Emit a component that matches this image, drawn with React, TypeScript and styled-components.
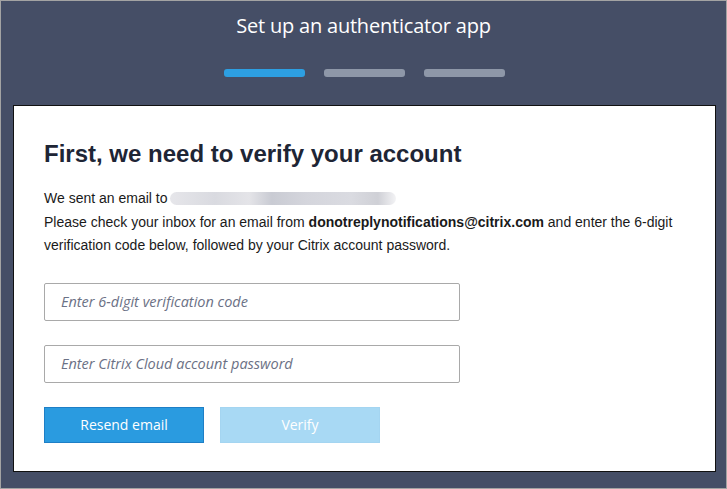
import React from "react";
import styled, { createGlobalStyle } from "styled-components";

const Global = createGlobalStyle`
  html, body { margin: 0; padding: 0; background: #454e66; }
  * { box-sizing: border-box; }
`;

const Frame = styled.div`
  width: 727px;
  height: 489px;
  border: 1px solid #a3a3a3;
  background: #454e66;
  display: flex;
  flex-direction: column;
  overflow: hidden;
`;

const Header = styled.header`
  display: flex;
  flex-direction: column;
  align-items: center;
  padding-top: 10px;
  height: 104px;
`;

const Title = styled.h1`
  margin: 0;
  font-family: "Open Sans", "Noto Sans", sans-serif;
  font-weight: 400;
  font-size: 20px;
  line-height: 30px;
  color: #ffffff;
  letter-spacing: -0.2px;
`;

const Steps = styled.div`
  display: flex;
  gap: 19px;
  margin-top: 28px;
  padding-left: 2px;
`;

const Step = styled.div<{ $active?: boolean }>`
  width: 81px;
  height: 8px;
  border-radius: 3px;
  background: ${(p) => (p.$active ? "#2d9fe2" : "#8e97a8")};
`;

const Card = styled.section`
  margin-left: 12px;
  width: 703px;
  height: 367px;
  background: #ffffff;
  border: 1px solid #111111;
  padding: 34px 30px 0 30px;
`;

const Heading = styled.h2`
  margin: 0;
  font-family: "Liberation Sans", Arial, sans-serif;
  font-weight: 700;
  font-size: 24px;
  line-height: 28px;
  color: #1e2535;
`;

const Body = styled.p`
  margin: 19px 0 0 0;
  font-family: "Liberation Sans", Arial, sans-serif;
  font-size: 14px;
  line-height: 23.5px;
  color: #1a1a1a;
`;

const Blur = styled.span`
  display: inline-block;
  vertical-align: -2px;
  width: 226px;
  height: 13px;
  margin-left: 3px;
  border-radius: 7px;
  background: linear-gradient(
    90deg,
    #e6e6ea 0%,
    #d9dae0 20%,
    #e4e4e8 35%,
    #c9cbd3 45%,
    #d4d5dc 60%,
    #dadbe1 80%,
    #cfd0d6 92%,
    #f3f3f5 100%
  );
`;

const Form = styled.div`
  display: flex;
  flex-direction: column;
  gap: 24px;
  margin-top: 25px;
`;

const Input = styled.input`
  width: 416px;
  height: 38px;
  border: 1px solid #a9a9a9;
  border-radius: 2px;
  padding: 0 16px;
  font-family: "Open Sans", "Noto Sans", sans-serif;
  font-style: italic;
  font-size: 14.5px;
  color: #333;
  background: #fff;
  outline: none;
  &::placeholder {
    color: #6b7185;
  }
`;

const Buttons = styled.div`
  display: flex;
  gap: 16px;
  margin-top: 24px;
`;

const Button = styled.button<{ $disabled?: boolean }>`
  width: 160px;
  height: 36px;
  border: 1px solid ${(p) => (p.$disabled ? "#a4d5f1" : "#1e7fc6")};
  background: ${(p) => (p.$disabled ? "#a8d9f4" : "#2a9be0")};
  color: #ffffff;
  font-family: "Open Sans", "Noto Sans", sans-serif;
  font-size: 14px;
  font-weight: 500;
  cursor: pointer;
  padding: 0;
`;

export default function App() {
  return (
    <>
      <Global />
      <Frame>
        <Header>
          <Title>Set up an authenticator app</Title>
          <Steps>
            <Step $active />
            <Step />
            <Step />
          </Steps>
        </Header>
        <Card>
          <Heading>First, we need to verify your account</Heading>
          <Body>
            We sent an email to
            <Blur />
            <br />
            Please check your inbox for an email from{" "}
            <b>donotreplynotifications@citrix.com</b> and enter the 6-digit
            <br />
            verification code below, followed by your Citrix account password.
          </Body>
          <Form>
            <Input placeholder="Enter 6-digit verification code" />
            <Input type="password" placeholder="Enter Citrix Cloud account password" />
          </Form>
          <Buttons>
            <Button>Resend email</Button>
            <Button $disabled>Verify</Button>
          </Buttons>
        </Card>
      </Frame>
    </>
  );
}
